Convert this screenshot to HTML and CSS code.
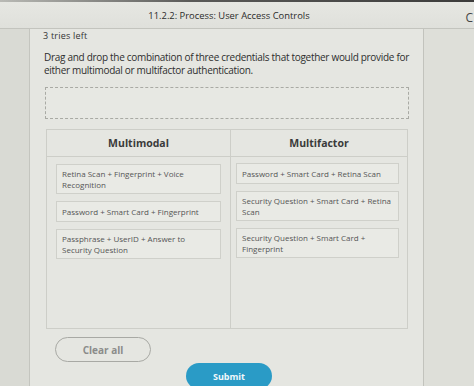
FILE: index.html
```html
<!DOCTYPE html>
<html>
<head>
<meta charset="utf-8">
<link rel="stylesheet" href="styles.css">
</head>
<body>
<div class="topstrip"></div>
<header class="header">
  <div class="title">11.2.2: Process: User Access Controls</div>
  <div class="side-c">C</div>
</header>
<div class="main">
  <div class="gutter"></div>
  <section class="panel">
    <div class="tries">3 tries left</div>
    <p class="question">Drag and drop the combination of three credentials that together would provide for either multimodal or multifactor authentication.</p>
    <div class="dropzone"></div>
    <div class="columns">
      <div class="col col-left">
        <div class="col-head">Multimodal</div>
        <div class="items">
          <div class="item two">Retina Scan + Fingerprint + Voice Recognition</div>
          <div class="item one">Password + Smart Card + Fingerprint</div>
          <div class="item two">Passphrase + UserID + Answer to Security Question</div>
        </div>
      </div>
      <div class="col col-right">
        <div class="col-head">Multifactor</div>
        <div class="items">
          <div class="item one">Password + Smart Card + Retina Scan</div>
          <div class="item two">Security Question + Smart Card + Retina Scan</div>
          <div class="item two">Security Question + Smart Card + Fingerprint</div>
        </div>
      </div>
    </div>
    <div class="actions">
      <button class="btn-clear">Clear all</button>
      <button class="btn-submit">Submit</button>
    </div>
  </section>
  <div class="right-area"></div>
</div>
</body>
</html>
```
FILE: styles.css
```css
* { box-sizing: border-box; }
html, body { margin: 0; padding: 0; }
body {
  width: 474px;
  height: 386px;
  overflow: hidden;
  background: #dcddd7;
  font-family: "Open Sans", "Liberation Sans", sans-serif;
  color: #333;
}
.topstrip {
  height: 2px;
  background: linear-gradient(to right, #b9bab5, #5a5a58 40%, #3c3c3b);
}
.header {
  height: 27px;
  background: linear-gradient(to bottom, #e6e7e2, #dfe0db);
  border-bottom: 1px solid #c3c4be;
  display: flex;
  align-items: center;
  justify-content: center;
  position: relative;
}
.title {
  font-size: 9.4px;
  color: #2b2b2b;
  margin-right: 16px;
}
.side-c {
  position: absolute;
  right: 1px;
  top: 7px;
  font-size: 12px;
  color: #444;
}
.main {
  display: flex;
  height: 357px;
}
.gutter {
  width: 30px;
  background: #d9dad4;
  border-right: 1px solid #c4c5bf;
}
.panel {
  width: 394px;
  background: #e5e6e1;
  border-right: 1px solid #c2c3bd;
  padding: 1px 0 0 13px;
}
.right-area {
  flex: 1;
  background: #dedfd9;
}
.tries {
  font-size: 9px;
  letter-spacing: 0.2px;
  color: #333;
  line-height: 11px;
}
.question {
  margin: 10px 0 0 1px;
  font-size: 10px;
  letter-spacing: -0.3px;
  line-height: 13px;
  color: #2e2e2e;
  width: 378px;
}
.dropzone {
  margin: 10px 0 0 2px;
  width: 364px;
  height: 32px;
  border: 1px dashed #a9aaa4;
  background: #e7e8e3;
}
.columns {
  margin: 10px 0 0 3px;
  width: 362px;
  height: 200px;
  display: flex;
  border: 1px solid #cdcec8;
}
.col {
  display: flex;
  flex-direction: column;
}
.col-left {
  width: 184px;
  border-right: 1px solid #cdcec8;
}
.col-right {
  flex: 1;
}
.col-head {
  height: 27px;
  border-bottom: 1px solid #cdcec8;
  display: flex;
  align-items: center;
  justify-content: center;
  font-weight: 700;
  font-size: 10.5px;
  color: #3a3a3a;
}
.items {
  display: flex;
  flex-direction: column;
  gap: 7px;
  padding: 7px 9px 0 9px;
}
.col-right .items {
  padding: 6px 8px 0 5px;
}
.item {
  border: 1px solid #cfd0ca;
  background: #e9eae5;
  font-size: 8px;
  line-height: 11px;
  color: #555;
  padding: 3px 4px 3px 5px;
  display: flex;
  align-items: center;
}
.item.one { height: 21px; }
.item.two { height: 30px; }
.actions {
  position: relative;
  height: 60px;
}
.btn-clear {
  position: absolute;
  left: 12px;
  top: 8px;
  width: 96px;
  height: 25px;
  border: 1px solid #a8a9a4;
  border-radius: 13px;
  background: transparent;
  font-family: "Open Sans", "Liberation Sans", sans-serif;
  font-weight: 700;
  font-size: 10px;
  color: #8b8c8a;
  padding: 0;
}
.btn-submit {
  position: absolute;
  left: 143px;
  top: 34px;
  width: 86px;
  height: 26px;
  border: none;
  border-radius: 13px;
  background: #2a9bc6;
  font-family: "Open Sans", "Liberation Sans", sans-serif;
  font-weight: 700;
  font-size: 9px;
  color: #f2f8fb;
  padding: 0;
}
```
